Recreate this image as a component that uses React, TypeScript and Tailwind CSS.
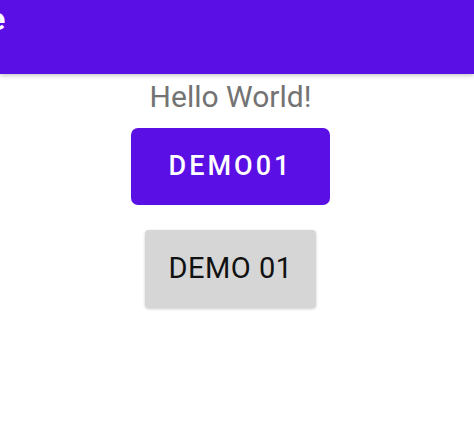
const App = () => {
  return (
    <div className="min-h-[428px] bg-white font-['Roboto',sans-serif]">
      <header className="h-[74px] overflow-hidden bg-[#5a0fe4] shadow-[0_2px_4px_rgba(0,0,0,0.2)]">
        <span className="ml-[-12px] block pt-[2px] text-[32px] font-bold leading-[34px] text-white">e</span>
      </header>
      <main className="flex flex-col items-center pr-[13px]">
        <p className="mt-[6px] text-[30px] leading-[34px] text-[#737373]">Hello World!</p>
        <button className="mt-[14px] h-[77px] w-[199px] rounded-[7px] bg-[#5a0fe4] text-[27px] font-medium tracking-[3px] text-white">
          DEMO01
        </button>
        <button className="mt-[25px] h-[78px] w-[171px] rounded-[4px] bg-[#d6d6d6] text-[29px] font-normal tracking-[0.5px] text-[#111111] shadow-[0_1px_3px_rgba(0,0,0,0.2)]">
          DEMO 01
        </button>
      </main>
    </div>
  );
};

export default App;
